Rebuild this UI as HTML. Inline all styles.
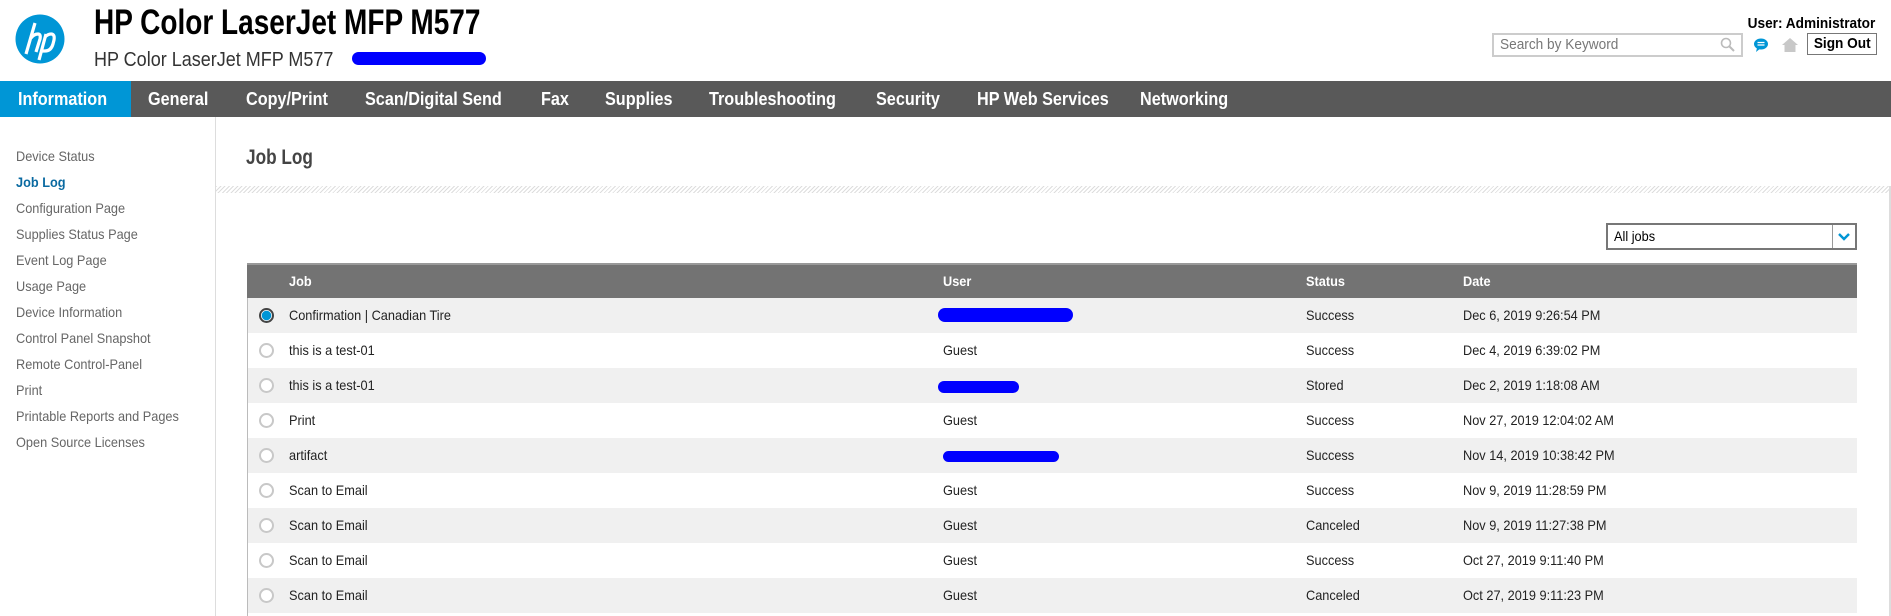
<!DOCTYPE html>
<html><head><meta charset="utf-8"><style>
*{margin:0;padding:0;box-sizing:border-box}
body{width:1891px;height:616px;overflow:hidden;background:#fff;font-family:"Liberation Sans",sans-serif;position:relative}
.a{position:absolute;white-space:nowrap}
.n{display:inline-block;transform:scaleX(.91);transform-origin:left center}
.nav{position:absolute;left:0;top:81px;width:1891px;height:36px;background:#595959}
.nav .a{top:0;line-height:36px;color:#fff;font-weight:bold;font-size:18px}
.nav .n{transform:scaleX(.9)}
.side .a{left:16px;font-size:14px;color:#666;line-height:16px}
.row{position:absolute;left:247px;width:1610px;height:35px;font-size:14px;color:#222;line-height:35px}
.row.s{background:#f0f0f0}
.row .a{top:0}
.rad{position:absolute;left:259px;width:15px;height:15px;border:2px solid #c8c8c8;border-radius:50%;background:#fff}
.blue{position:absolute;background:#0000ff;border-radius:8px}
</style></head><body>
<svg class="a" style="left:15px;top:14px" width="50" height="50" viewBox="0 0 50 50"><circle cx="25" cy="25" r="24.5" fill="#0096d6"/><g fill="none" stroke="#fff" stroke-width="3.2"><path d="M20 9 L11 40"/><path d="M16 24 Q19 20 23 20 Q26 20 25 25 L21 38"/><path d="M31 20 L24 46"/><path d="M30 23 Q33 20 36 20 Q40 20 39 26 L38 30 Q36 37 30 37 L27 37"/></g></svg>
<div class="a" style="left:94px;top:3px;font-size:35px;font-weight:bold;color:#000;line-height:40px"><span class="n" style="transform:scaleX(.8)">HP Color LaserJet MFP M577</span></div>
<div class="a" style="left:94px;top:47px;font-size:20px;color:#333;line-height:26px"><span class="n" style="transform:scaleX(.9)">HP Color LaserJet MFP M577</span></div>
<div class="blue" style="left:352px;top:52px;width:134px;height:13px"></div>
<div class="a" style="right:16px;top:15px;font-size:15px;font-weight:bold;color:#000"><span class="n" style="transform-origin:right center">User: Administrator</span></div>
<div class="a" style="left:1492px;top:33px;width:251px;height:24px;border:2px solid #ccc;font-size:15px;color:#777;line-height:20px;padding-left:6px"><span class="n">Search by Keyword</span></div>
<svg class="a" style="left:1720px;top:37px" width="16" height="16" viewBox="0 0 16 16"><circle cx="6" cy="6" r="4.5" fill="none" stroke="#bbb" stroke-width="1.6"/><path d="M9.5 9.5 L14 14" stroke="#bbb" stroke-width="2"/></svg>
<svg class="a" style="left:1753px;top:37px" width="16" height="16" viewBox="0 0 16 16"><ellipse cx="8" cy="7" rx="7" ry="5.5" fill="#0096d6"/><path d="M4 11 L3 15 L8 11Z" fill="#0096d6"/><path d="M4.5 5.5h7M4.5 8h7" stroke="#fff" stroke-width="1.2"/></svg>
<svg class="a" style="left:1782px;top:37px" width="16" height="16" viewBox="0 0 16 16"><path d="M8 1 L16 8 L13.5 8 L13.5 15 L2.5 15 L2.5 8 L0 8Z" fill="#c8c8c8"/></svg>
<div class="a" style="left:1807px;top:33px;width:70px;height:22px;border:1px solid #777;font-size:15px;font-weight:bold;text-align:center;line-height:20px"><span class="n" style="transform-origin:center">Sign Out</span></div>
<div class="nav">
<div class="a" style="left:0;width:131px;height:36px;background:#0096d6"></div>
<div class="a" style="left:18px"><span class="n">Information</span></div>
<div class="a" style="left:148px"><span class="n">General</span></div>
<div class="a" style="left:246px"><span class="n">Copy/Print</span></div>
<div class="a" style="left:365px"><span class="n">Scan/Digital Send</span></div>
<div class="a" style="left:541px"><span class="n">Fax</span></div>
<div class="a" style="left:605px"><span class="n">Supplies</span></div>
<div class="a" style="left:709px"><span class="n">Troubleshooting</span></div>
<div class="a" style="left:876px"><span class="n">Security</span></div>
<div class="a" style="left:977px"><span class="n">HP Web Services</span></div>
<div class="a" style="left:1140px"><span class="n">Networking</span></div>
</div>
<div class="a" style="left:215px;top:117px;width:1px;height:499px;background:#ddd"></div>
<div class="side">
<div class="a" style="top:148px"><span class="n">Device Status</span></div>
<div class="a" style="top:174px;color:#0a6aa1;font-weight:bold"><span class="n">Job Log</span></div>
<div class="a" style="top:200px"><span class="n">Configuration Page</span></div>
<div class="a" style="top:226px"><span class="n">Supplies Status Page</span></div>
<div class="a" style="top:252px"><span class="n">Event Log Page</span></div>
<div class="a" style="top:278px"><span class="n">Usage Page</span></div>
<div class="a" style="top:304px"><span class="n">Device Information</span></div>
<div class="a" style="top:330px"><span class="n">Control Panel Snapshot</span></div>
<div class="a" style="top:356px"><span class="n">Remote Control-Panel</span></div>
<div class="a" style="top:382px"><span class="n">Print</span></div>
<div class="a" style="top:408px"><span class="n">Printable Reports and Pages</span></div>
<div class="a" style="top:434px"><span class="n">Open Source Licenses</span></div>
</div>
<div class="a" style="left:246px;top:146px;font-size:21px;font-weight:bold;color:#444"><span class="n" style="transform:scaleX(.82)">Job Log</span></div>
<div class="a" style="left:216px;top:186px;width:1675px;height:7px;background:repeating-linear-gradient(135deg,#ddd 0 1px,#fff 1px 3px)"></div>
<div class="a" style="left:1889px;top:186px;width:2px;height:430px;background:#ddd"></div>
<div class="a" style="left:1606px;top:223px;width:251px;height:27px;border:2px solid #777;font-size:14px;line-height:23px;padding-left:6px;color:#000"><span class="n">All jobs</span></div>
<div class="a" style="left:1832px;top:225px;width:1px;height:23px;background:#999"></div>
<svg class="a" style="left:1838px;top:232px" width="12" height="10" viewBox="0 0 12 10"><path d="M1 2 L6 7 L11 2" fill="none" stroke="#0096d6" stroke-width="2.4"/></svg>
<div class="a" style="left:247px;top:263px;width:1610px;height:2px;background:#999"></div>
<div class="a" style="left:247px;top:265px;width:1610px;height:33px;background:#737373;color:#fff;font-weight:bold;font-size:14px;line-height:33px">
<div class="a" style="left:42px"><span class="n">Job</span></div>
<div class="a" style="left:696px"><span class="n">User</span></div>
<div class="a" style="left:1059px"><span class="n">Status</span></div>
<div class="a" style="left:1216px"><span class="n">Date</span></div>
</div>

<div class="row s" style="top:298px"><div class="a" style="left:42px"><span class="n">Confirmation | Canadian Tire</span></div><div class="a" style="left:1059px"><span class="n">Success</span></div><div class="a" style="left:1216px"><span class="n">Dec 6, 2019 9:26:54 PM</span></div></div>
<div class="row" style="top:333px"><div class="a" style="left:42px"><span class="n">this is a test-01</span></div><div class="a" style="left:696px"><span class="n">Guest</span></div><div class="a" style="left:1059px"><span class="n">Success</span></div><div class="a" style="left:1216px"><span class="n">Dec 4, 2019 6:39:02 PM</span></div></div>
<div class="row s" style="top:368px"><div class="a" style="left:42px"><span class="n">this is a test-01</span></div><div class="a" style="left:1059px"><span class="n">Stored</span></div><div class="a" style="left:1216px"><span class="n">Dec 2, 2019 1:18:08 AM</span></div></div>
<div class="row" style="top:403px"><div class="a" style="left:42px"><span class="n">Print</span></div><div class="a" style="left:696px"><span class="n">Guest</span></div><div class="a" style="left:1059px"><span class="n">Success</span></div><div class="a" style="left:1216px"><span class="n">Nov 27, 2019 12:04:02 AM</span></div></div>
<div class="row s" style="top:438px"><div class="a" style="left:42px"><span class="n">artifact</span></div><div class="a" style="left:1059px"><span class="n">Success</span></div><div class="a" style="left:1216px"><span class="n">Nov 14, 2019 10:38:42 PM</span></div></div>
<div class="row" style="top:473px"><div class="a" style="left:42px"><span class="n">Scan to Email</span></div><div class="a" style="left:696px"><span class="n">Guest</span></div><div class="a" style="left:1059px"><span class="n">Success</span></div><div class="a" style="left:1216px"><span class="n">Nov 9, 2019 11:28:59 PM</span></div></div>
<div class="row s" style="top:508px"><div class="a" style="left:42px"><span class="n">Scan to Email</span></div><div class="a" style="left:696px"><span class="n">Guest</span></div><div class="a" style="left:1059px"><span class="n">Canceled</span></div><div class="a" style="left:1216px"><span class="n">Nov 9, 2019 11:27:38 PM</span></div></div>
<div class="row" style="top:543px"><div class="a" style="left:42px"><span class="n">Scan to Email</span></div><div class="a" style="left:696px"><span class="n">Guest</span></div><div class="a" style="left:1059px"><span class="n">Success</span></div><div class="a" style="left:1216px"><span class="n">Oct 27, 2019 9:11:40 PM</span></div></div>
<div class="row s" style="top:578px"><div class="a" style="left:42px"><span class="n">Scan to Email</span></div><div class="a" style="left:696px"><span class="n">Guest</span></div><div class="a" style="left:1059px"><span class="n">Canceled</span></div><div class="a" style="left:1216px"><span class="n">Oct 27, 2019 9:11:23 PM</span></div></div>
<div class="a" style="left:247px;top:298px;width:1px;height:318px;background:#bbb"></div>

<div class="rad" style="top:308px;border-color:#444;background:radial-gradient(circle,#0096d6 0 4.5px,#fff 5px)"></div>
<div class="rad" style="top:343px"></div>
<div class="rad" style="top:378px"></div>
<div class="rad" style="top:413px"></div>
<div class="rad" style="top:448px"></div>
<div class="rad" style="top:483px"></div>
<div class="rad" style="top:518px"></div>
<div class="rad" style="top:553px"></div>
<div class="rad" style="top:588px"></div>

<div class="blue" style="left:938px;top:308px;width:135px;height:14px"></div>
<div class="blue" style="left:938px;top:381px;width:81px;height:12px"></div>
<div class="blue" style="left:943px;top:451px;width:116px;height:11px"></div>
</body></html>
